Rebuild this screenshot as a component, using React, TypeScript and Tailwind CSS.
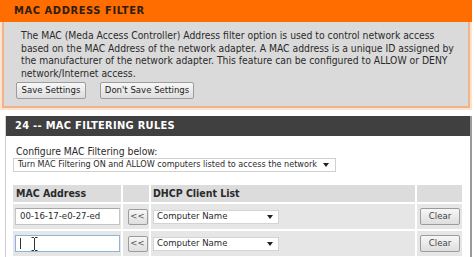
function Arrow() {
  return <span className="inline-block w-0 h-0 border-x-[3px] border-t-[4px] border-x-transparent border-t-[#222]" />;
}

function Btn({ label, className = "" }: { label: string; className?: string }) {
  return (
    <div
      className={`flex items-center justify-center whitespace-nowrap rounded-[2px] border border-[#9c9c9c] bg-gradient-to-b from-[#f7f7f7] to-[#dedede] text-[9.5px] text-[#222] ${className}`}
    >
      {label}
    </div>
  );
}

function Row({ mac, focused }: { mac: string; focused?: boolean }) {
  return (
    <>
      <div className="flex items-center bg-[#e6e6e6] h-[25px] pl-[2px]">
        <div
          className={`relative flex items-center w-[105px] h-[17px] bg-white border pl-[4px] text-[9.5px] ${
            focused ? "border-[#8fb3dc]" : "border-[#c4c4c4] border-t-[#a8a8a8]"
          }`}
        >
          {mac}
          {focused && (
            <>
              <span className="w-px h-[11px] bg-[#333]" />
              <svg className="absolute left-[15px] top-[1px]" width="7" height="14" viewBox="0 0 7 14">
                <path d="M0.5 0.5h2.5M4 0.5h2.5M3.5 1v12M0.5 13.5h2.5M4 13.5h2.5" stroke="#333" strokeWidth="1" fill="none" />
              </svg>
            </>
          )}
        </div>
      </div>
      <div className="flex items-center justify-center bg-[#e6e6e6]">
        <Btn label="<<" className="w-[20px] h-[16px] ml-[3px] text-[#555]" />
      </div>
      <div className="flex items-center bg-[#e6e6e6] pl-[2px]">
        <div className="flex items-center justify-between w-[126px] h-[14px] bg-white border border-[#d4d4d4] pl-[3px] pr-[5px] text-[9.5px] whitespace-nowrap">
          <span>Computer Name</span>
          <Arrow />
        </div>
      </div>
      <div className="flex items-center bg-[#e6e6e6] pl-[3px]">
        <Btn label="Clear" className="w-[40px] h-[17px] text-[#444]" />
      </div>
    </>
  );
}

export default function App() {
  return (
    <div className="w-[474px] h-[257px] overflow-hidden bg-white font-['DejaVu_Sans_Condensed','Liberation_Sans',sans-serif] text-[#2a2a2a]">
      {/* MAC address filter */}
      <div className="w-[472px] bg-[#fbe3d0] pb-[2px]">
        <div className="h-[22px] bg-[#ff6d00] flex items-center pl-[14px] text-[11px] font-bold text-[#2e1d10] tracking-[0.6px]">
          MAC ADDRESS FILTER
        </div>
        <div className="mx-[2px] border-x-2 border-b-2 border-[#efb48a] bg-[#dadada] pt-[7px] pb-[7px]">
          <p className="pl-[17px] text-[10.3px] leading-[12.5px] whitespace-nowrap">
            The MAC (Meda Access Controller) Address filter option is used to control network access
            <br />
            based on the MAC Address of the network adapter. A MAC address is a unique ID assigned by
            <br />
            the manufacturer of the network adapter. This feature can be configured to ALLOW or DENY
            <br />
            network/Internet access.
          </p>
          <div className="flex gap-[14px] pl-[12px] mt-[3px]">
            <Btn label="Save Settings" className="w-[70px] h-[17px]" />
            <Btn label="Don't Save Settings" className="w-[94px] h-[17px]" />
          </div>
        </div>
      </div>

      {/* MAC filtering rules */}
      <div className="ml-[5px] mt-[6px] w-[467px] h-[200px] border-l border-[#cfcfcf] border-r-2 border-r-[#9a9a9a]">
        <div className="h-[20px] bg-[#404040] flex items-center pl-[9px] text-[11px] font-bold text-white tracking-[0.3px]">
          24 -- MAC FILTERING RULES
        </div>
        <div className="pl-[7px] pt-[9px]">
          <div className="pl-[3px] text-[10.3px] leading-[12px] whitespace-nowrap">Configure MAC Filtering below:</div>
          <div className="mt-[1px] flex items-center gap-[6px] w-fit h-[14px] border border-[#d0d0d0] bg-white pl-[4px] pr-[6px] text-[9px] whitespace-nowrap">
            <span>Turn MAC Filtering ON and ALLOW computers listed to access the network</span>
            <Arrow />
          </div>
          <div className="mt-[13px] grid grid-cols-[108px_26px_264px_45px] gap-[2px]">
            <div className="h-[17px] bg-[#dcdcdc] flex items-center pl-[3px] text-[10.5px] font-bold">MAC Address</div>
            <div className="bg-[#dcdcdc]" />
            <div className="bg-[#dcdcdc] flex items-center pl-[2px] text-[10.5px] font-bold">DHCP Client List</div>
            <div className="bg-[#dcdcdc]" />
            <Row mac="00-16-17-e0-27-ed" />
            <Row mac="" focused />
          </div>
        </div>
      </div>
    </div>
  );
}
